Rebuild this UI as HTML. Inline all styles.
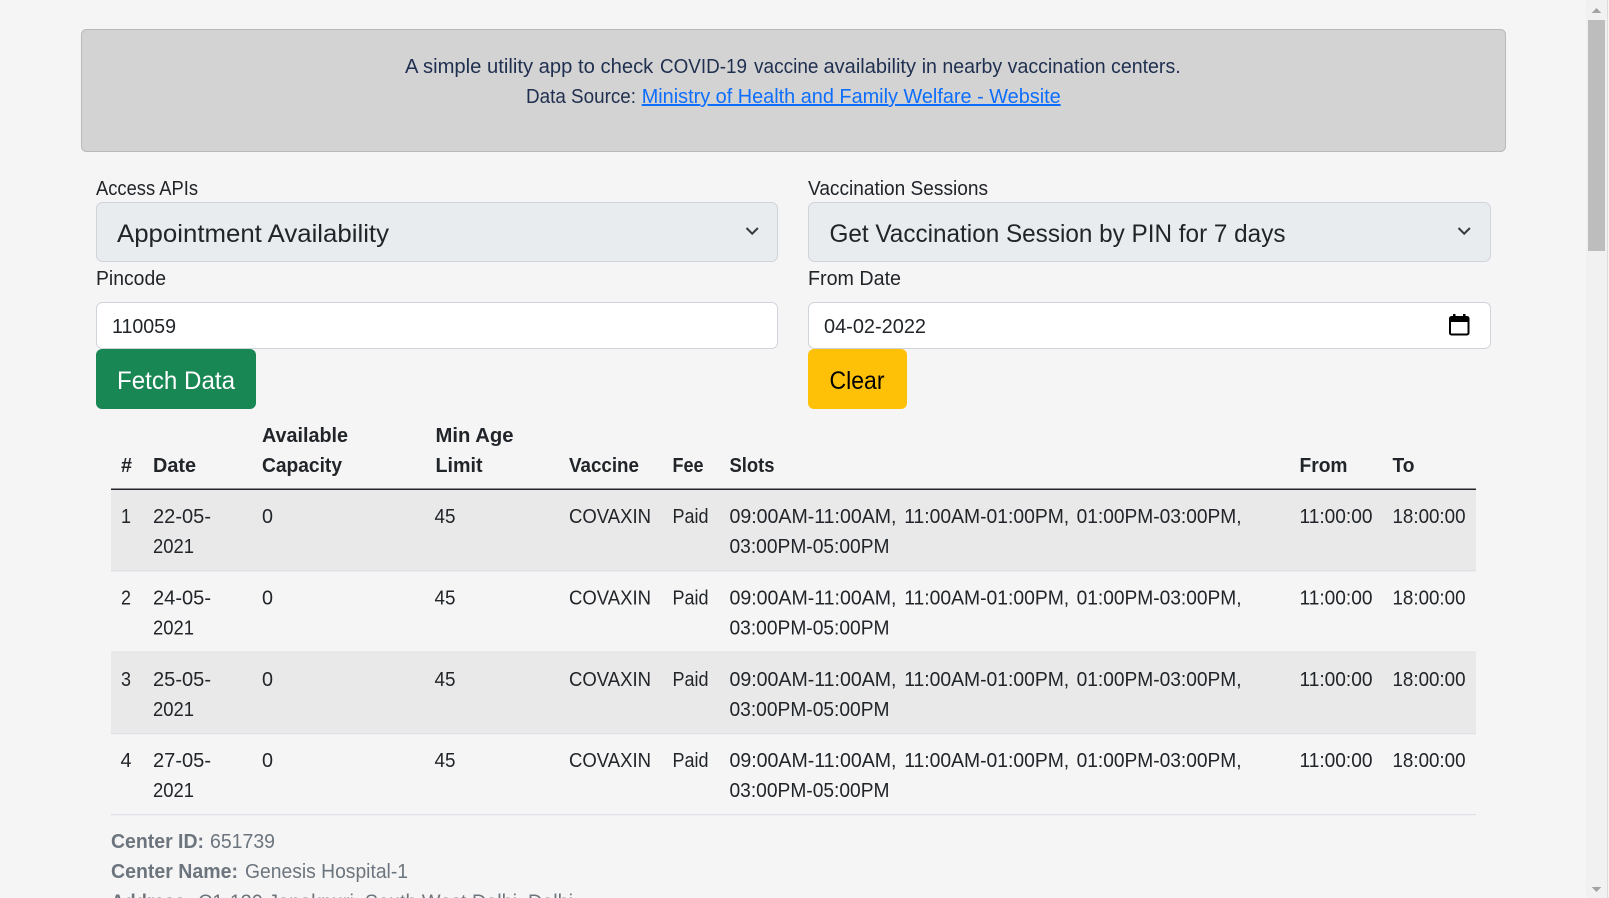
<!DOCTYPE html>
<html lang="en"><head><meta charset="utf-8"><title>Vaccine Availability</title>
<style>
html,body{margin:0;padding:0;width:1609px;height:898px;overflow:hidden;background:#f5f5f5}
svg{display:block}
text{font-family:"Liberation Sans",sans-serif;font-size:20px;fill:#212529;white-space:pre}
.b{font-weight:700}
.l{font-size:25px}
.g{fill:#6c757d}
.j{fill:#1f2f4f}
</style></head><body>
<svg width="1609" height="898" viewBox="0 0 1609 898" xmlns="http://www.w3.org/2000/svg">
<rect width="1609" height="898" fill="#f5f5f5"/>
<!-- header panel -->
<rect x="81.5" y="29.5" width="1424" height="122" rx="5" fill="#d3d3d3" stroke="#b9b9b9"/>
<text class="j" x="405" y="73" textLength="248.300" lengthAdjust="spacingAndGlyphs">A simple utility app to check</text>
<text class="j" x="660" y="73" textLength="87" lengthAdjust="spacingAndGlyphs">COVID-19</text>
<text class="j" x="754" y="73" textLength="64.500" lengthAdjust="spacingAndGlyphs">vaccine</text>
<text class="j" x="823.500" y="73" textLength="92.500" lengthAdjust="spacingAndGlyphs">availability</text>
<text class="j" x="921.700" y="73" textLength="259" lengthAdjust="spacingAndGlyphs">in nearby vaccination centers.</text>
<text class="j" x="526" y="103" textLength="110" lengthAdjust="spacingAndGlyphs">Data Source:</text>
<text x="641.700" y="103" textLength="419" lengthAdjust="spacingAndGlyphs" style="fill:#0d6efd;text-decoration:underline">Ministry of Health and Family Welfare - Website</text>
<!-- left form -->
<text x="96" y="195" textLength="102" lengthAdjust="spacingAndGlyphs">Access APIs</text>
<rect x="96.5" y="202.5" width="681" height="59" rx="6" fill="#e9ecef" stroke="#ced4da"/>
<text class="l" x="117" y="242" textLength="272" lengthAdjust="spacingAndGlyphs">Appointment Availability</text>
<path d="M746.500 228l5.700 5.700 5.700-5.700" fill="none" stroke="#343a40" stroke-width="2"/>
<text x="96" y="285" textLength="70" lengthAdjust="spacingAndGlyphs">Pincode</text>
<rect x="96.5" y="302.5" width="681" height="46" rx="6" fill="#fff" stroke="#ced4da"/>
<text x="112" y="333" textLength="64" lengthAdjust="spacingAndGlyphs">110059</text>
<rect x="96" y="349" width="160" height="60" rx="6" fill="#198754"/>
<text class="l" x="117" y="389" textLength="118" lengthAdjust="spacingAndGlyphs" style="fill:#fff">Fetch Data</text>
<!-- right form -->
<text x="808" y="195" textLength="180" lengthAdjust="spacingAndGlyphs">Vaccination Sessions</text>
<rect x="808.5" y="202.5" width="682" height="59" rx="6" fill="#e9ecef" stroke="#ced4da"/>
<text class="l" x="829.500" y="242" textLength="456" lengthAdjust="spacingAndGlyphs">Get Vaccination Session by PIN for 7 days</text>
<path d="M1458.500 228l5.700 5.700 5.700-5.700" fill="none" stroke="#343a40" stroke-width="2"/>
<text x="808" y="285" textLength="93" lengthAdjust="spacingAndGlyphs">From Date</text>
<rect x="808.5" y="302.5" width="682" height="46" rx="6" fill="#fff" stroke="#ced4da"/>
<text x="824" y="333" textLength="102" lengthAdjust="spacingAndGlyphs">04-02-2022</text>
<path d="M1450 318.5q0-1.5 1.5-1.5h16q1 0 1 1.5V322h-18.500z" fill="#000"/>
<rect x="1450" y="317" width="18.500" height="17.500" rx="1.500" fill="none" stroke="#000" stroke-width="2"/>
<rect x="1453" y="314" width="2.500" height="4" fill="#000"/><rect x="1463" y="314" width="2.500" height="4" fill="#000"/>
<rect x="808" y="349" width="99" height="60" rx="6" fill="#ffc107"/>
<text class="l" x="829.500" y="389" textLength="55" lengthAdjust="spacingAndGlyphs" style="fill:#000">Clear</text>
<!-- table -->
<rect x="111" y="490" width="1365" height="81" fill="#e9e9e9"/>
<rect x="111" y="653" width="1365" height="80" fill="#e9e9e9"/>
<rect x="111" y="488.500" width="1365" height="1.500" fill="#212529"/>
<rect x="111" y="570" width="1365" height="1.500" fill="#dee2e6"/>
<rect x="111" y="651.500" width="1365" height="1.250" fill="#dee2e6"/>
<rect x="111" y="733" width="1365" height="1.250" fill="#dee2e6"/>
<rect x="111" y="814" width="1365" height="1.250" fill="#dee2e6"/>
<g class="b">
<text class="b" x="262" y="442" textLength="86" lengthAdjust="spacingAndGlyphs">Available</text>
<text class="b" x="435.500" y="442" textLength="78" lengthAdjust="spacingAndGlyphs">Min Age</text>
<text class="b" x="121" y="472" textLength="11" lengthAdjust="spacingAndGlyphs">#</text>
<text class="b" x="153" y="472" textLength="43" lengthAdjust="spacingAndGlyphs">Date</text>
<text class="b" x="262" y="472" textLength="80" lengthAdjust="spacingAndGlyphs">Capacity</text>
<text class="b" x="435.500" y="472" textLength="47" lengthAdjust="spacingAndGlyphs">Limit</text>
<text class="b" x="569" y="472" textLength="70" lengthAdjust="spacingAndGlyphs">Vaccine</text>
<text class="b" x="672.500" y="472" textLength="31" lengthAdjust="spacingAndGlyphs">Fee</text>
<text class="b" x="729.500" y="472" textLength="45" lengthAdjust="spacingAndGlyphs">Slots</text>
<text class="b" x="1299.500" y="472" textLength="48" lengthAdjust="spacingAndGlyphs">From</text>
<text class="b" x="1392.500" y="472" textLength="22" lengthAdjust="spacingAndGlyphs">To</text>
</g>
<!-- row 1 -->
<text x="121" y="523" textLength="10" lengthAdjust="spacingAndGlyphs">1</text>
<text x="153" y="523" textLength="58" lengthAdjust="spacingAndGlyphs">22-05-</text>
<text x="153" y="553" textLength="41" lengthAdjust="spacingAndGlyphs">2021</text>
<text x="262" y="523" textLength="11" lengthAdjust="spacingAndGlyphs">0</text>
<text x="434.500" y="523" textLength="21" lengthAdjust="spacingAndGlyphs">45</text>
<text x="569" y="523" textLength="82" lengthAdjust="spacingAndGlyphs">COVAXIN</text>
<text x="672.500" y="523" textLength="36" lengthAdjust="spacingAndGlyphs">Paid</text>
<text x="729.500" y="523" textLength="167" lengthAdjust="spacingAndGlyphs">09:00AM-11:00AM,</text>
<text x="904.200" y="523" textLength="165" lengthAdjust="spacingAndGlyphs">11:00AM-01:00PM,</text>
<text x="1076.600" y="523" textLength="165" lengthAdjust="spacingAndGlyphs">01:00PM-03:00PM,</text>
<text x="729.500" y="553" textLength="160" lengthAdjust="spacingAndGlyphs">03:00PM-05:00PM</text>
<text x="1299.500" y="523" textLength="73" lengthAdjust="spacingAndGlyphs">11:00:00</text>
<text x="1392.500" y="523" textLength="73" lengthAdjust="spacingAndGlyphs">18:00:00</text>
<!-- row 2 -->
<text x="121" y="604.500" textLength="10" lengthAdjust="spacingAndGlyphs">2</text>
<text x="153" y="604.500" textLength="58" lengthAdjust="spacingAndGlyphs">24-05-</text>
<text x="153" y="634.500" textLength="41" lengthAdjust="spacingAndGlyphs">2021</text>
<text x="262" y="604.500" textLength="11" lengthAdjust="spacingAndGlyphs">0</text>
<text x="434.500" y="604.500" textLength="21" lengthAdjust="spacingAndGlyphs">45</text>
<text x="569" y="604.500" textLength="82" lengthAdjust="spacingAndGlyphs">COVAXIN</text>
<text x="672.500" y="604.500" textLength="36" lengthAdjust="spacingAndGlyphs">Paid</text>
<text x="729.500" y="604.500" textLength="167" lengthAdjust="spacingAndGlyphs">09:00AM-11:00AM,</text>
<text x="904.200" y="604.500" textLength="165" lengthAdjust="spacingAndGlyphs">11:00AM-01:00PM,</text>
<text x="1076.600" y="604.500" textLength="165" lengthAdjust="spacingAndGlyphs">01:00PM-03:00PM,</text>
<text x="729.500" y="634.500" textLength="160" lengthAdjust="spacingAndGlyphs">03:00PM-05:00PM</text>
<text x="1299.500" y="604.500" textLength="73" lengthAdjust="spacingAndGlyphs">11:00:00</text>
<text x="1392.500" y="604.500" textLength="73" lengthAdjust="spacingAndGlyphs">18:00:00</text>
<!-- row 3 -->
<text x="121" y="686" textLength="10" lengthAdjust="spacingAndGlyphs">3</text>
<text x="153" y="686" textLength="58" lengthAdjust="spacingAndGlyphs">25-05-</text>
<text x="153" y="716" textLength="41" lengthAdjust="spacingAndGlyphs">2021</text>
<text x="262" y="686" textLength="11" lengthAdjust="spacingAndGlyphs">0</text>
<text x="434.500" y="686" textLength="21" lengthAdjust="spacingAndGlyphs">45</text>
<text x="569" y="686" textLength="82" lengthAdjust="spacingAndGlyphs">COVAXIN</text>
<text x="672.500" y="686" textLength="36" lengthAdjust="spacingAndGlyphs">Paid</text>
<text x="729.500" y="686" textLength="167" lengthAdjust="spacingAndGlyphs">09:00AM-11:00AM,</text>
<text x="904.200" y="686" textLength="165" lengthAdjust="spacingAndGlyphs">11:00AM-01:00PM,</text>
<text x="1076.600" y="686" textLength="165" lengthAdjust="spacingAndGlyphs">01:00PM-03:00PM,</text>
<text x="729.500" y="716" textLength="160" lengthAdjust="spacingAndGlyphs">03:00PM-05:00PM</text>
<text x="1299.500" y="686" textLength="73" lengthAdjust="spacingAndGlyphs">11:00:00</text>
<text x="1392.500" y="686" textLength="73" lengthAdjust="spacingAndGlyphs">18:00:00</text>
<!-- row 4 -->
<text x="120.500" y="767" textLength="11" lengthAdjust="spacingAndGlyphs">4</text>
<text x="153" y="767" textLength="58" lengthAdjust="spacingAndGlyphs">27-05-</text>
<text x="153" y="797" textLength="41" lengthAdjust="spacingAndGlyphs">2021</text>
<text x="262" y="767" textLength="11" lengthAdjust="spacingAndGlyphs">0</text>
<text x="434.500" y="767" textLength="21" lengthAdjust="spacingAndGlyphs">45</text>
<text x="569" y="767" textLength="82" lengthAdjust="spacingAndGlyphs">COVAXIN</text>
<text x="672.500" y="767" textLength="36" lengthAdjust="spacingAndGlyphs">Paid</text>
<text x="729.500" y="767" textLength="167" lengthAdjust="spacingAndGlyphs">09:00AM-11:00AM,</text>
<text x="904.200" y="767" textLength="165" lengthAdjust="spacingAndGlyphs">11:00AM-01:00PM,</text>
<text x="1076.600" y="767" textLength="165" lengthAdjust="spacingAndGlyphs">01:00PM-03:00PM,</text>
<text x="729.500" y="797" textLength="160" lengthAdjust="spacingAndGlyphs">03:00PM-05:00PM</text>
<text x="1299.500" y="767" textLength="73" lengthAdjust="spacingAndGlyphs">11:00:00</text>
<text x="1392.500" y="767" textLength="73" lengthAdjust="spacingAndGlyphs">18:00:00</text>
<!-- details -->
<text class="b g" x="111" y="848" textLength="93" lengthAdjust="spacingAndGlyphs">Center ID:</text>
<text class="g" x="210" y="848" textLength="65" lengthAdjust="spacingAndGlyphs">651739</text>
<text class="b g" x="111" y="878" textLength="127" lengthAdjust="spacingAndGlyphs">Center Name:</text>
<text class="g" x="245" y="878" textLength="163" lengthAdjust="spacingAndGlyphs">Genesis Hospital-1</text>
<text class="b g" x="111" y="908.500" textLength="80" lengthAdjust="spacingAndGlyphs">Address:</text>
<text class="g" x="198" y="908.500" textLength="375" lengthAdjust="spacingAndGlyphs">C1-130 Janakpuri, South West Delhi, Delhi</text>
<!-- scrollbar -->
<rect x="1586" y="0" width="21" height="898" fill="#f1f1f1"/>
<rect x="1607" y="0" width="1" height="898" fill="#dcdcdc"/>
<rect x="1608" y="0" width="1" height="898" fill="#f8f4f4"/>
<rect x="1588" y="20" width="17" height="231" fill="#bdbdbd"/>
<path d="M1596.500 8l4.800 5h-9.600z" fill="#a3a3a3"/>
<path d="M1596.500 892l4.800-5h-9.600z" fill="#a3a3a3"/>
</svg>
</body></html>
